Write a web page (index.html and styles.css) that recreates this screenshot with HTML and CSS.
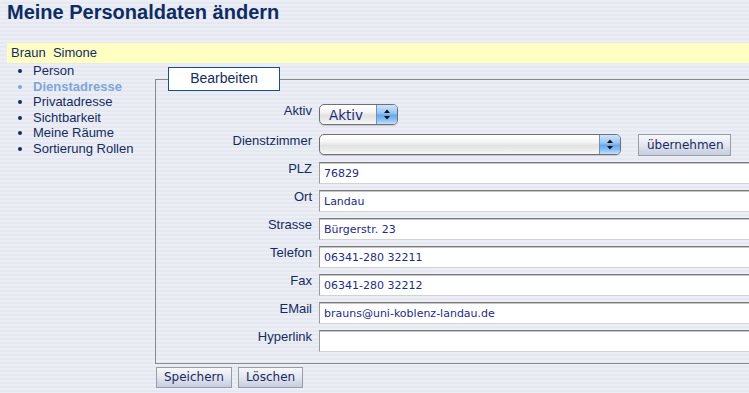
FILE: index.html
```html
<!DOCTYPE html>
<html lang="de">
<head>
<meta charset="utf-8">
<title>Meine Personaldaten ändern</title>
<link rel="stylesheet" href="styles.css">
</head>
<body>
<h1 class="title">Meine Personaldaten ändern</h1>
<div class="namebar">Braun&nbsp; Simone</div>
<div class="content">
  <ul class="menu">
    <li>Person</li>
    <li class="active">Dienstadresse</li>
    <li>Privatadresse</li>
    <li>Sichtbarkeit</li>
    <li>Meine Räume</li>
    <li>Sortierung Rollen</li>
  </ul>
  <div class="main">
    <fieldset class="panel">
      <legend class="legend"><span class="legend-text">Bearbeiten</span></legend>
      <div class="form">
        <div class="row row-aktiv">
          <span class="lbl">Aktiv</span>
          <div class="popup popup-small">
            <span class="popup-text">Aktiv</span>
            <span class="popup-arrow"><svg width="8" height="11" viewBox="0 0 8 11"><path d="M4 0.5 L7 4 L1 4 Z M1 7 L7 7 L4 10.5 Z" fill="#111"/></svg></span>
          </div>
        </div>
        <div class="row">
          <span class="lbl">Dienstzimmer</span>
          <div class="popup popup-wide">
            <span class="popup-text"></span>
            <span class="popup-arrow"><svg width="8" height="11" viewBox="0 0 8 11"><path d="M4 0.5 L7 4 L1 4 Z M1 7 L7 7 L4 10.5 Z" fill="#111"/></svg></span>
          </div>
          <button class="btn btn-take" type="button">übernehmen</button>
        </div>
        <div class="row"><span class="lbl">PLZ</span><input class="field" type="text" value="76829"></div>
        <div class="row"><span class="lbl">Ort</span><input class="field" type="text" value="Landau"></div>
        <div class="row"><span class="lbl">Strasse</span><input class="field" type="text" value="Bürgerstr. 23"></div>
        <div class="row"><span class="lbl">Telefon</span><input class="field" type="text" value="06341-280 32211"></div>
        <div class="row"><span class="lbl">Fax</span><input class="field" type="text" value="06341-280 32212"></div>
        <div class="row"><span class="lbl">EMail</span><input class="field" type="text" value="brauns@uni-koblenz-landau.de"></div>
        <div class="row row-last"><span class="lbl">Hyperlink</span><input class="field" type="text" value=""></div>
      </div>
    </fieldset>
    <div class="actions">
      <button class="btn" type="button">Speichern</button>
      <button class="btn" type="button">Löschen</button>
    </div>
  </div>
</div>
</body>
</html>
```

FILE: styles.css
```css
html {
  overflow: hidden;
  background: repeating-linear-gradient(to bottom, #eceef5 0px, #eceef5 2px, #e5e8f0 2px, #e5e8f0 4px);
  height: 100%;
}

body {
  margin: 0;
  padding: 0 0 0 7px;
  font-family: "Liberation Sans", Arial, sans-serif;
  font-size: 13px;
  color: #132c60;
}

.title {
  margin: 0 0 19px 0;
  font-size: 20px;
  line-height: 24px;
  font-weight: bold;
  color: #0e2c64;
  white-space: nowrap;
}

.namebar {
  height: 20px;
  line-height: 20px;
  background: #ffffc2;
  padding-left: 4px;
  font-size: 13px;
  color: #132c60;
}

.content {
  display: flex;
  align-items: flex-start;
}

.menu {
  flex: none;
  width: 122px;
  margin: 0;
  padding: 0 0 0 26px;
  list-style: disc;
  font-size: 13px;
  line-height: 15.5px;
  color: #132c60;
}

.menu li {
  white-space: nowrap;
}

.menu .active {
  color: #7ea6d8;
  font-weight: bold;
}

.main {
  flex: none;
  width: 720px;
}

.panel {
  margin: 4px 0 0 0;
  padding: 0 0 11px 0;
  border: 1px solid #8a8a8a;
  min-width: 0;
}

.legend {
  margin: 0 0 0 12px;
  padding: 0;
  height: 22px;
  background: #ffffff;
  border: 1px solid #1d4c8c;
}

.legend-text {
  display: block;
  width: 110px;
  height: 22px;
  line-height: 20px;
  text-align: center;
  font-size: 14px;
  color: #132c60;
}

.form {
  margin-top: 13px;
}

.row {
  display: flex;
  align-items: flex-start;
  margin-bottom: 6px;
}

.row-aktiv {
  margin-bottom: 9px;
}

.row-last {
  margin-bottom: 0;
}

.lbl {
  flex: none;
  width: 156px;
  margin-right: 7px;
  text-align: right;
  line-height: 13px;
  font-size: 13px;
  color: #132c60;
  white-space: nowrap;
}

.field {
  flex: none;
  box-sizing: border-box;
  width: 520px;
  height: 22px;
  margin: 0;
  padding: 0 4px;
  border: 1px solid;
  border-color: #7a7a7a #a8a8a8 #d2d2d2 #9c9c9c;
  box-shadow: inset 0 1px 0 #c4c4c4;
  background: #ffffff;
  font-family: "DejaVu Sans", Verdana, sans-serif;
  font-size: 11px;
  color: #1e2c82;
  outline: none;
}

.popup {
  flex: none;
  box-sizing: border-box;
  display: flex;
  height: 21px;
  border: 1px solid #6f6f75;
  border-radius: 5px;
  overflow: hidden;
  background: linear-gradient(to bottom, #ffffff 0%, #f6f6f6 35%, #e2e2e2 55%, #ececec 80%, #f8f8f8 100%);
  box-shadow: 0 1px 1px rgba(0, 0, 0, 0.15);
}

.popup-small {
  width: 79px;
}

.popup-wide {
  width: 302px;
}

.popup-text {
  flex: 1;
  padding-left: 9px;
  line-height: 20px;
  font-family: "DejaVu Sans", Verdana, sans-serif;
  font-size: 13.5px;
  color: #1d2c80;
}

.popup-arrow {
  flex: none;
  width: 20px;
  display: flex;
  align-items: center;
  justify-content: center;
  border-left: 1px solid #7a8fb0;
  background: linear-gradient(to bottom, #cfe4fb 0%, #9cc8f4 40%, #6aa8ea 55%, #8ec2f5 80%, #c5e2fc 100%);
}

.btn {
  flex: none;
  box-sizing: border-box;
  height: 21px;
  margin: 0;
  padding: 0 7px;
  border: 1px solid #9a9ca6;
  border-radius: 0;
  background: linear-gradient(to bottom, #f7f8fc 0%, #e2e6f0 50%, #c6cce0 100%);
  font-family: "DejaVu Sans", Verdana, sans-serif;
  font-size: 12px;
  line-height: 19px;
  color: #1b2a5c;
}

.btn-take {
  height: 22px;
  margin-left: 17px;
  padding: 0 8px;
  width: 93px;
}

.actions {
  display: flex;
  gap: 6px;
  margin-top: 3px;
  padding-left: 1px;
}
```
